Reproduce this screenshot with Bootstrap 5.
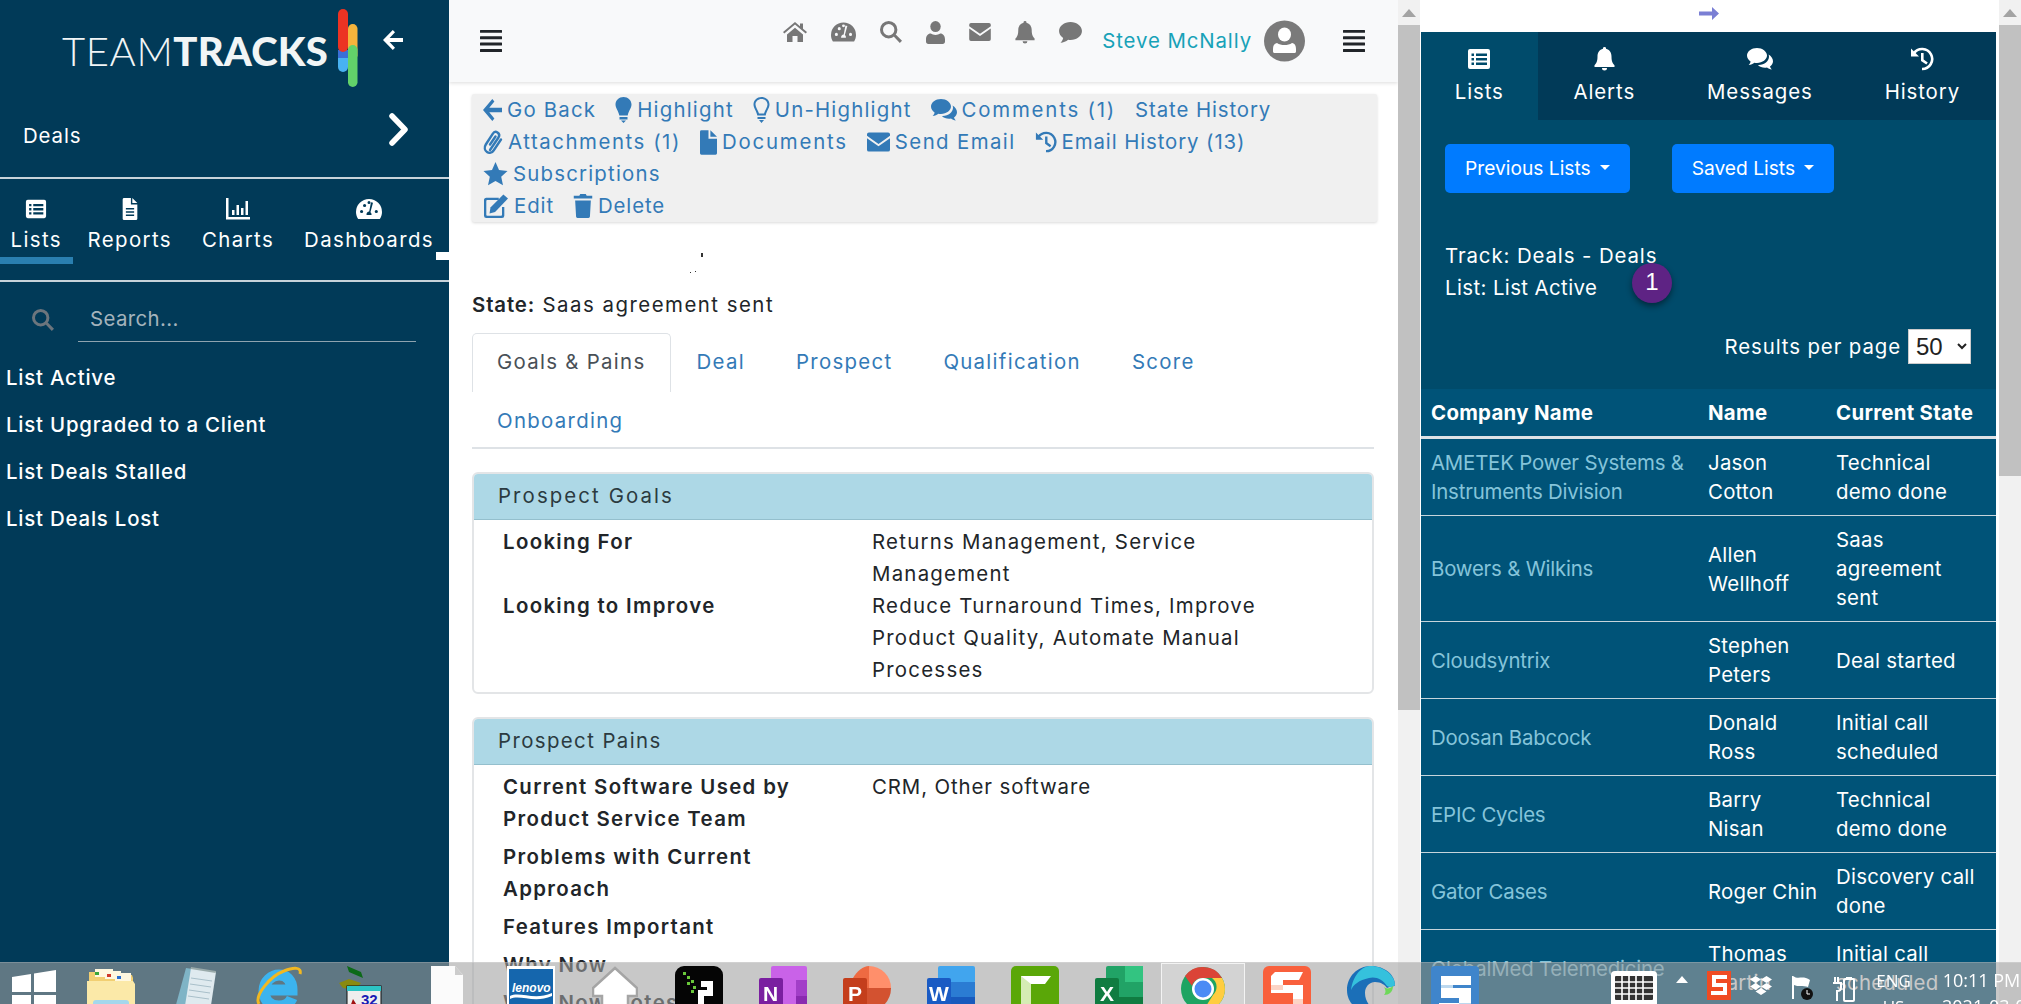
<!DOCTYPE html>
<html lang="en">
<head>
<meta charset="utf-8">
<title>TeamTracks</title>
<link href="https://cdn.jsdelivr.net/npm/bootstrap@5.3.0/dist/css/bootstrap.min.css" rel="stylesheet">
<style>
html,body{height:100%;overflow:hidden}
body{font-family:Inter,"Noto Sans",sans-serif;font-size:20.4px;letter-spacing:.9px;line-height:32px;color:#212529;background:#fff}
.shell{height:1004px;width:2021px}
svg{flex:none;fill:currentColor}
/* sidebar */
.side{width:449px;background:#013a58;color:#fff;flex:none}
.brand{height:179px;border-bottom:2px solid #c7d3da;position:relative}
.logo-row{height:90px;padding:9px 0 0 62px;gap:10px}
.logo-word{font-family:Lato,sans-serif;font-size:40px;line-height:53px;letter-spacing:.6px;color:#f1f5f6;font-weight:300;white-space:nowrap}
.logo-word b{font-weight:900;letter-spacing:.2px}
.back-ar{margin:21px 0 0 15px}
.deals-row{padding:0 40px 0 23px;height:87px}
.deals-row span{margin-top:4px}
.deals-row svg{margin-top:-8px}
.stabs{height:103px;border-bottom:2px solid #c7d3da;position:relative;letter-spacing:1.4px}
.stab{padding:19px 15px 0;height:85px;color:#fff;text-decoration:none;display:flex;flex-direction:column;align-items:center;line-height:30px}
.stab:hover{color:#fff}
.stab svg{margin-bottom:5px}
.stab.on{border-bottom:7px solid #2a7fb0;width:74px;padding-left:0;padding-right:0}
.stab-mark{position:absolute;right:0;top:73px;width:13px;height:8px;background:#fff}
.sfind{padding:19px 33px 0 32px;gap:24px;height:60px;align-items:center}
.sfind svg{margin-top:-4px}
.sfind input{background:transparent;border:0;border-bottom:1px solid #8ea3af;border-radius:0;color:#fff;width:338px;height:40px;padding:0 12px 5px;font-size:20.4px;letter-spacing:.4px}
.sfind input::placeholder{color:#a4b3bc}
.s-list{padding:0 6px;margin:12px 0 0;list-style:none}
.s-list li{height:47px;line-height:47px;font-weight:500;letter-spacing:.8px}
/* main */
.mainp{width:949px;flex:none;overflow:hidden;background:#fff}
.topbar{height:82px;background:#f8f9fa;box-shadow:0 1px 4px rgba(0,0,0,.14);padding:0 33px 0 31px;position:relative}
.top-ic{color:#777;gap:0;margin-left:auto;margin-top:-18px}
.top-ic svg{margin-right:24px}
.top-ic svg:last-child{margin-right:21px}
.uname{color:#17a2b8;white-space:nowrap;margin:0 12px 0 -1px}
.avatar{margin-right:38px}
.page{padding:12px 24px 0 23px}
.tools{background:#f0f0f0;box-shadow:0 1px 3px rgba(0,0,0,.15);padding:0 11px;height:128px;margin-right:-3px;border-radius:2px}
.tool-row{height:32px;gap:19px}
.tool-row a{color:#337ab7;text-decoration:none;display:inline-flex;align-items:center;gap:5px;white-space:nowrap}
.tool-row a.sp-a{letter-spacing:1.2px}
.tool-row a.sp-b{letter-spacing:1.4px}
.tool-row a.sp-c{letter-spacing:1.55px}
.tool-row a.sp-d{letter-spacing:1.8px}
.specks{height:67px;position:relative}
.specks i{position:absolute;background:#333;display:block}
.sp1{left:229px;top:31px;width:2px;height:4px}
.sp2{left:218px;top:50px;width:1px;height:1px}
.sp3{left:223px;top:49px;width:1px;height:1px}
.state-l{height:32px;letter-spacing:1.5px}
.state-l b{font-weight:600;letter-spacing:.9px}
.mtabs{margin-top:12px;border-bottom:2px solid #dee2e6;height:116px;flex-wrap:wrap;gap:0 1px;align-content:flex-start}
.mtabs .nav-link{height:59px;padding:13px 25px;color:#337ab7;line-height:32px;font-size:20.4px;border:0;letter-spacing:1.3px}
.mtabs .nav-link.active{color:#495057;background:#fff;border:1px solid #dee2e6;border-bottom:0;padding:12px 24px;border-radius:5px 5px 0 0}
.mtabs .brk{flex-basis:100%;height:0}
.pcard{margin-top:23px;border:2px solid #e3e5e7;border-radius:6px;overflow:hidden}
.pcard .card-header{background:#add8e6;border:0;border-bottom:1px solid #94bfcd;height:46px;padding:0 24px;line-height:44px;border-radius:0;color:#2b3a40;letter-spacing:1.4px}
.pcard .card-header.hd-goals{letter-spacing:2.1px}
.pcard .card-body{padding:6px 29px 6px}
.kv{display:grid;grid-template-columns:369px 1fr}
.kv b{font-weight:600;letter-spacing:1.35px}
.kv span{letter-spacing:1.25px}
.kv.gapb{margin-bottom:6px}
.kv.gapb span{letter-spacing:.9px}
/* fake scrollbars */
.sbar{width:22px;flex:none;background:#f1f1f1;display:flex;flex-direction:column}
.sbar-up{height:25px;display:flex;align-items:center;justify-content:center;color:#a3a3a3}
.sbar-thumb{background:#c1c1c1}
.sbar-main{height:685px}
.sbar-right{height:451px}
.sbar-gap{width:1px;flex:none}
/* right panel */
.rpanel{width:575px;flex:none;background:#004b6b;color:#fff}
.r-head{height:32px;background:#fff;color:#7a7fd4;display:flex;justify-content:center;padding-top:7px}
.rtabs{height:88px;background:#013a58}
.rtab{padding:15px 36px 0;display:flex;flex-direction:column;align-items:center;color:#fff;text-decoration:none;line-height:30px}
.rtab:hover{color:#fff}
.rtab svg{margin-bottom:6px}
.rtab.on{background:#004b6b;width:117px;padding-left:0;padding-right:0}
.r-btns{padding:24px 24px 0;gap:42px;box-sizing:content-box;height:49px}
.btn-blue{background:#007bff;color:#fff;border:0;font-size:19.2px;letter-spacing:0;height:49px;padding:0 20px;border-radius:5px;line-height:49px}
.btn-blue::after{margin-left:9px}
.r-track{padding:47px 24px 0;box-sizing:content-box;position:relative;height:64px}
.r-track .tight{letter-spacing:.4px}
.numdot{position:absolute;left:211px;top:70px;width:40px;height:40px;border-radius:50%;background:#5e2384;box-shadow:0 3px 6px rgba(0,0,0,.45);font-family:"Liberation Sans",Arial,sans-serif;font-size:24px;letter-spacing:0;line-height:38px;text-align:center;color:#fff}
.r-per{padding:0 25px 0 0;height:60px;margin-top:25px;justify-content:flex-end;align-items:flex-start;gap:7px}
.r-per span{line-height:36px}
.r-per select{width:63px;height:35px;background:#fff;border:1px solid #ccc;font-family:"Liberation Sans",Arial,sans-serif;font-size:24px;letter-spacing:0;padding:0 0 0 3px;border-radius:0;color:#222}
.rtable{--bs-table-bg:#005378;--bs-table-color:#fff;--bs-table-border-color:#c6d4db;table-layout:fixed;width:575px;margin:0;color:#fff}
.rtable td,.rtable th{padding:9px 5px 9px 10px;line-height:29px;vertical-align:middle;border-bottom:1px solid #c6d4db;background:#005378;color:#fff;white-space:nowrap;font-size:20.4px;letter-spacing:.25px}
.rtable th{font-weight:700;height:47px;border-bottom:3px solid #dee2e6;letter-spacing:.3px}
.rtable td a{color:#85c4da;text-decoration:none;letter-spacing:-.2px}
/* taskbar */
.taskbar{position:fixed;left:0;right:0;top:962px;height:42px;background:rgba(161,161,161,.59);border-top:1px solid rgba(255,255,255,.18);overflow:hidden;display:flex;letter-spacing:0}
.tslot{width:84px;flex:none;display:flex;justify-content:center;align-items:flex-start;padding-top:3px;color:#fff}
.tslot.act{background:rgba(255,255,255,.2);border:1px solid #f3f3f3;border-bottom:0}
.tfirst{margin-left:-15px}
.win-ic{margin-left:14px;margin-top:4px}
.tray{position:absolute;left:0;top:0;right:0;bottom:0;pointer-events:none}
.tray-row{position:absolute;right:0;top:0;height:42px;display:flex;align-items:flex-start}
.tray-ic{margin-top:13px;margin-right:19px}
.tray-clock{font-family:"Open Sans",sans-serif;color:#fff;font-size:18px;line-height:26px;text-align:center;white-space:nowrap;overflow:hidden;width:79px;margin-top:4px;margin-left:-1px}
.tray-lang{font-family:"Open Sans",sans-serif;color:#fff;font-size:17px;line-height:26px;text-align:center;width:45px;margin:5px 24px 0 0;padding-right:6px}
</style>
</head>
<body>
<svg width="0" height="0" class="position-absolute">
<defs>
<symbol id="i-list" viewBox="0 0 24 24"><path fill-rule="evenodd" d="M3 2h18a2 2 0 0 1 2 2v16a2 2 0 0 1-2 2H3a2 2 0 0 1-2-2V4a2 2 0 0 1 2-2zM4.500 6.500v2.500h2.500V6.500zm4.500 0v2.500h11V6.500zM4.500 11v2.500h2.500V11zm4.500 0v2.500h11V11zM4.500 15.500V18h2.500v-2.500zm4.500 0V18h11v-2.500z"/></symbol>
<symbol id="i-doc" viewBox="0 0 18 24"><path fill-rule="evenodd" d="M1 1.500A1.500 1.500 0 0 1 2.500 0H10v7h7v15.500a1.500 1.500 0 0 1-1.500 1.500h-13A1.500 1.500 0 0 1 1 22.500zM4.500 11v1.500h9V11zm0 3.500V16h9v-1.500zm0 3.500v1.500h9V18z"/><path d="M11.500 0 17 5.500h-5.500z"/></symbol>
<symbol id="i-chart" viewBox="0 0 24 22"><path d="M0 0h2.500v19H24v2.500H0zM6 12h2.500v5H6zM10.500 7H13v10h-2.500zM15 10h2.500v7H15zM19.500 3H22v14h-2.500z"/></symbol>
<symbol id="i-gauge" viewBox="0 0 26 20"><path fill-rule="evenodd" d="M13 0A13 13 0 0 0 0 13c0 2.500.7 4.800 2 6.800.2.200.4.200.6.200h20.800c.2 0 .4 0 .6-.2 1.300-2 2-4.300 2-6.800A13 13 0 0 0 13 0zM4 12.500a1.600 1.600 0 1 1 3.200 0 1.600 1.600 0 0 1-3.200 0zM7 6.500a1.600 1.600 0 1 1 3.200 0 1.600 1.600 0 0 1-3.200 0zM11.500 3.600a1.500 1.500 0 1 1 3 0 1.500 1.500 0 0 1-3 0zM18.700 12.500a1.600 1.600 0 1 1 3.200 0 1.600 1.600 0 0 1-3.200 0zM17 3.800l-2.600 9.400c.9.700 1.300 1.700 1.100 2.800H10.500c-.2-1.800 1.100-3.400 2.700-3.400L15 3.300z"/></symbol>
<symbol id="i-home" viewBox="0 0 24 20"><path d="M12 0 0 10l1.300 1.500L12 2.600l10.700 8.900L24 10l-4-3.300V1.500h-3v2.700zM4 12.500 12 5.700l8 6.800V20h-5.500v-6h-5v6H4z"/></symbol>
<symbol id="i-search" viewBox="0 0 22 22"><circle cx="8.700" cy="8.700" r="7.200" fill="none" stroke="currentColor" stroke-width="3"/><path d="M13.500 15.300l2-2L22 19.800 19.800 22z"/></symbol>
<symbol id="i-user" viewBox="0 0 20 24"><ellipse cx="10" cy="5.800" rx="5.500" ry="5.800"/><path d="M5 13c1.400 1 3 1.500 5 1.500s3.600-.5 5-1.500c3 0 5 2.500 5 6.200v2.300c0 1.500-1 2.500-2.500 2.500h-15C1 24 0 23 0 21.500v-2.300C0 15.500 2 13 5 13z"/></symbol>
<symbol id="i-mail" viewBox="0 0 24 20"><path d="M2 0h20a2 2 0 0 1 2 2v1.500L12 12 0 3.500V2a2 2 0 0 1 2-2zM0 6l12 8.500L24 6v12a2 2 0 0 1-2 2H2a2 2 0 0 1-2-2z"/></symbol>
<symbol id="i-bell" viewBox="0 0 20 24"><path d="M10 0a1.500 1.500 0 0 0-1.500 1.700C5 2.500 3 5.500 3 9.500c0 5-1.200 7-3 8.800V20h20v-1.700c-1.800-1.800-3-3.800-3-8.800 0-4-2-7-5.500-7.800A1.500 1.500 0 0 0 10 0zM7.500 21a2.500 2.500 0 0 0 5 0z"/></symbol>
<symbol id="i-bub" viewBox="0 0 24 22"><path d="M12 0C5.400 0 0 4.200 0 9.500c0 3 1.700 5.600 4.300 7.300-.3 1.800-1.300 3.500-2.800 5 3.200-.2 5.900-1.300 8-3.100.8.100 1.600.2 2.500.2 6.600 0 12-4.200 12-9.400S18.600 0 12 0z"/></symbol>
<symbol id="i-bubs" viewBox="0 0 26 24"><path d="M10 1C4.500 1 0 4.400 0 8.600c0 2.400 1.400 4.500 3.600 5.900-.2 1.200-.8 2.400-2 3.500 2.400-.2 4.400-1.100 5.800-2.300.8.200 1.700.3 2.600.3 5.500 0 10-3.400 10-7.400S15.500 1 10 1z"/><path d="M21.500 7.500c.3.700.5 1.500.5 2.300 0 4.400-4.500 8-10.200 8.200-.3 0-.6 0-.9 0 1.700 1.800 4.300 2.800 7.100 2.800.7 0 1.300 0 2-.2 1.300 1 2.900 1.800 4.800 2-1-1-1.500-2-1.800-3C24.700 18.400 26 16.500 26 14.300c0-2.800-1.800-5.300-4.500-6.800z"/></symbol>
<symbol id="i-back" viewBox="0 0 20 20"><path d="M9.800 0 12 2.200 6.600 8H20v4H6.600L12 17.800 9.800 20 0 10z"/></symbol>
<symbol id="i-bulb" viewBox="0 0 16 26"><path d="M8 0C3.500 0 0 3.200 0 7.500c0 3.500 2.800 6.200 3.800 11h8.400c1-4.800 3.800-7.500 3.800-11C16 3.200 12.500 0 8 0zM4 20h8v2.500H4zM5.500 23.500h5L8 26z"/></symbol>
<symbol id="i-bulbo" viewBox="0 0 16 26"><path fill-rule="evenodd" d="M8 0C3.500 0 0 3.200 0 7.500c0 3.500 2.800 6.200 3.800 11h8.400c1-4.800 3.800-7.500 3.800-11C16 3.200 12.500 0 8 0zm0 2c3.400 0 6 2.400 6 5.500 0 2.800-2.400 5.300-3.500 9h-5C4.400 12.800 2 10.300 2 7.500 2 4.400 4.600 2 8 2z"/><path d="M4 20h8v2H4zM5.500 23h5L8 26z"/></symbol>
<symbol id="i-clip" viewBox="0 0 20 26"><path fill="none" stroke="currentColor" stroke-width="2.400" stroke-linecap="round" d="M7 21 15.500 8.500c1.200-2 .6-4-1-5s-3.600-.6-4.800 1.300L2.800 15.500c-1.900 3-1 6 1.200 7.500s5 .8 6.800-1.800L18 10.500M7 15.500l5.500-8"/></symbol>
<symbol id="i-file" viewBox="0 0 18 26"><path d="M0 1.500A1.500 1.500 0 0 1 1.500 0H9v9h9v15.500a1.500 1.500 0 0 1-1.500 1.500h-15A1.500 1.500 0 0 1 0 24.500zM11 0l7 7h-7z"/></symbol>
<symbol id="i-hist" viewBox="0 0 24 24"><path fill="none" stroke="currentColor" stroke-width="2.600" d="M3.800 6.500A10 10 0 1 1 12 22"/><path d="M1 1.500v8h8zM11 6h2.600v6.500l4.200 3-1.500 2.100L11 14z"/></symbol>
<symbol id="i-star" viewBox="0 0 24 24"><path d="M12 0l3.500 8 8.500.9-6.300 5.800 1.800 8.600L12 19l-7.500 4.300 1.800-8.600L0 8.900 8.500 8z"/></symbol>
<symbol id="i-edit" viewBox="0 0 26 26"><path d="M3 4h13v2.500H3.500a1 1 0 0 0-1 1v15a1 1 0 0 0 1 1h15a1 1 0 0 0 1-1V14H22v9.500a2.500 2.500 0 0 1-2.500 2.500H2.500A2.500 2.500 0 0 1 0 23.500v-17A2.500 2.500 0 0 1 3 4z"/><path d="M21 .5 26 5 12 19.500l-6 1.500 1-6.300z"/></symbol>
<symbol id="i-trash" viewBox="0 0 20 26"><path d="M7 0h6l1 2h6v3H0V2h6zM1.500 7h17l-1 17.500c0 .8-.7 1.500-1.500 1.500H4c-.8 0-1.500-.7-1.500-1.500z"/></symbol>
<symbol id="i-burger" viewBox="0 0 22 22"><path d="M.500 0h21a.500.500 0 0 1 .5.500v1.800a.5.500 0 0 1-.5.500H.5a.5.5 0 0 1-.5-.5V.5A.5.5 0 0 1 .500 0zM.5 6.200h21a.5.5 0 0 1 .5.500v2a.5.5 0 0 1-.5.500H.5a.5.5 0 0 1-.5-.5v-2a.5.5 0 0 1 .5-.5zM.5 12.600h21a.5.5 0 0 1 .5.5v2a.5.5 0 0 1-.5.500H.5a.5.5 0 0 1-.5-.5v-2a.5.5 0 0 1 .5-.5zM.5 19h21a.5.5 0 0 1 .5.500v2a.5.5 0 0 1-.5.500H.5a.5.5 0 0 1-.5-.5v-2A.5.5 0 0 1 .5 19z"/></symbol>
</defs>
</svg>

<div class="shell d-flex">
  <!-- sidebar -->
  <aside class="side">
    <div class="brand">
      <div class="logo-row d-flex align-items-start">
        <div class="logo-word mt-3">TEAM<b>TRACKS</b></div>
        <svg width="20" height="78" viewBox="0 0 20 78"><rect x="0" y="41" width="10" height="22" rx="5" fill="#48b2f2"/><rect x="0" y="41" width="10" height="8" fill="#3a6fd8"/><rect x="10" y="15" width="9.500" height="36" rx="4.700" fill="#f5b43c"/><rect x="0" y="0" width="10" height="43" rx="5" fill="#ec3323"/><rect x="10" y="36" width="9.500" height="42" rx="4.700" fill="#62d26a"/></svg>
        <svg width="20" height="20" class="back-ar"><use href="#i-back"/></svg>
      </div>
      <div class="deals-row d-flex align-items-center justify-content-between">
        <span>Deals</span>
        <svg width="20" height="33" viewBox="0 0 20 33"><path d="M3 3l13 13.500L3 30" fill="none" stroke="#fff" stroke-width="5.500" stroke-linecap="round" stroke-linejoin="round"/></svg>
      </div>
    </div>
    <nav class="stabs d-flex">
      <a class="stab on" href="#"><svg width="24" height="22" viewBox="0 0 24 24"><use href="#i-list"/></svg>Lists</a>
      <a class="stab" href="#"><svg width="18" height="22" viewBox="0 0 18 24"><use href="#i-doc"/></svg>Reports</a>
      <a class="stab" href="#"><svg width="24" height="22" viewBox="0 0 24 22"><use href="#i-chart"/></svg>Charts</a>
      <a class="stab" href="#"><svg width="26" height="22" viewBox="0 0 26 20"><use href="#i-gauge"/></svg>Dashboards</a>
      <span class="stab-mark"></span>
    </nav>
    <div class="sfind d-flex">
      <svg width="22" height="22" viewBox="0 0 22 22" class="text-secondary"><use href="#i-search"/></svg>
      <input class="form-control" type="text" placeholder="Search...">
    </div>
    <ul class="s-list">
      <li>List Active</li>
      <li>List Upgraded to a Client</li>
      <li>List Deals Stalled</li>
      <li>List Deals Lost</li>
    </ul>
  </aside>

  <!-- main -->
  <main class="mainp">
    <div class="topbar d-flex align-items-center">
      <svg width="22" height="22" class="text-dark"><use href="#i-burger"/></svg>
      <div class="top-ic d-flex align-items-center">
        <svg width="24" height="20"><use href="#i-home"/></svg>
        <svg width="25" height="20"><use href="#i-gauge"/></svg>
        <svg width="22" height="22"><use href="#i-search"/></svg>
        <svg width="19" height="23"><use href="#i-user"/></svg>
        <svg width="22" height="18"><use href="#i-mail"/></svg>
        <svg width="20" height="23"><use href="#i-bell"/></svg>
        <svg width="23" height="21"><use href="#i-bub"/></svg>
      </div>
      <span class="uname">Steve McNally</span>
      <svg class="avatar" width="41" height="42" viewBox="0 0 41 42"><circle cx="20.500" cy="21" r="20.500" fill="#7a7a7a"/><ellipse cx="20.500" cy="14.500" rx="6.500" ry="7" fill="#fff"/><path d="M13 23c2 1.500 4.800 2 7.500 2s5.500-.5 7.500-2c3 .5 4 3 4 6v2.500c0 1.200-1 1.500-2 1.500H11c-1 0-2-.3-2-1.500V29c0-3 1-5.500 4-6z" fill="#fff"/></svg>
      <svg width="22" height="22" class="text-dark"><use href="#i-burger"/></svg>
    </div>
    <div class="page">
      <div class="tools">
        <div class="tool-row d-flex align-items-center">
          <a class="sp-a" href="#"><svg width="19" height="22" viewBox="0 0 20 20" preserveAspectRatio="none"><use href="#i-back"/></svg>Go Back</a>
          <a class="sp-a" href="#"><svg width="17" height="26"><use href="#i-bulb"/></svg>Highlight</a>
          <a class="sp-a" href="#"><svg width="17" height="26"><use href="#i-bulbo"/></svg>Un-Highlight</a>
          <a class="sp-d" href="#"><svg width="26" height="24"><use href="#i-bubs"/></svg>Comments (1)</a>
          <a href="#">State History</a>
        </div>
        <div class="tool-row d-flex align-items-center">
          <a class="sp-c" href="#"><svg width="20" height="26"><use href="#i-clip"/></svg>Attachments (1)</a>
          <a class="sp-d" href="#"><svg width="17" height="25"><use href="#i-file"/></svg>Documents</a>
          <a class="sp-b" href="#"><svg width="23" height="20"><use href="#i-mail"/></svg>Send Email</a>
          <a href="#"><svg width="22" height="22"><use href="#i-hist"/></svg>Email History (13)</a>
        </div>
        <div class="tool-row d-flex align-items-center">
          <a class="sp-a" href="#"><svg width="25" height="24"><use href="#i-star"/></svg>Subscriptions</a>
        </div>
        <div class="tool-row d-flex align-items-center">
          <a href="#"><svg width="26" height="24"><use href="#i-edit"/></svg>Edit</a>
          <a href="#"><svg width="20" height="24"><use href="#i-trash"/></svg>Delete</a>
        </div>
      </div>
      <div class="specks"><i class="sp1"></i><i class="sp2"></i><i class="sp3"></i></div>
      <div class="state-l"><b>State:</b> Saas agreement sent</div>
      <ul class="nav mtabs">
        <li class="nav-item"><a class="nav-link active" href="#">Goals &amp; Pains</a></li>
        <li class="nav-item"><a class="nav-link" href="#">Deal</a></li>
        <li class="nav-item"><a class="nav-link" href="#">Prospect</a></li>
        <li class="nav-item"><a class="nav-link" href="#">Qualification</a></li>
        <li class="nav-item"><a class="nav-link" href="#">Score</a></li>
        <li class="brk"></li>
        <li class="nav-item"><a class="nav-link" href="#">Onboarding</a></li>
      </ul>
      <div class="card pcard">
        <div class="card-header hd-goals">Prospect Goals</div>
        <div class="card-body">
          <div class="kv"><b>Looking For</b><span>Returns Management, Service<br>Management</span></div>
          <div class="kv"><b>Looking to Improve</b><span>Reduce Turnaround Times, Improve<br>Product Quality, Automate Manual<br>Processes</span></div>
        </div>
      </div>
      <div class="card pcard">
        <div class="card-header">Prospect Pains</div>
        <div class="card-body">
          <div class="kv gapb"><b>Current Software Used by<br>Product Service Team</b><span>CRM, Other software</span></div>
          <div class="kv gapb"><b>Problems with Current<br>Approach</b><span></span></div>
          <div class="kv gapb"><b>Features Important</b><span></span></div>
          <div class="kv gapb"><b>Why Now</b><span></span></div>
          <div class="kv"><b>Why Now Notes</b><span></span></div>
        </div>
      </div>
    </div>
  </main>

  <div class="sbar">
    <div class="sbar-up"><svg width="14" height="8"><path d="M7 0l7 8H0z"/></svg></div>
    <div class="sbar-thumb sbar-main"></div>
  </div>
  <div class="sbar-gap"></div>

  <!-- right panel -->
  <section class="rpanel">
    <div class="r-head"><svg width="20" height="13" viewBox="0 0 20 13"><path d="M0 4.500h13V0l7 6.500-7 6.500V8.500H0z"/></svg></div>
    <nav class="rtabs d-flex">
      <a class="rtab on" href="#"><svg width="24" height="24"><use href="#i-list"/></svg>Lists</a>
      <a class="rtab" href="#"><svg width="21" height="24"><use href="#i-bell"/></svg>Alerts</a>
      <a class="rtab" href="#"><svg width="26" height="24"><use href="#i-bubs"/></svg>Messages</a>
      <a class="rtab" href="#"><svg width="24" height="24"><use href="#i-hist"/></svg>History</a>
    </nav>
    <div class="r-btns d-flex">
      <button class="btn btn-blue dropdown-toggle" type="button">Previous Lists</button>
      <button class="btn btn-blue dropdown-toggle" type="button">Saved Lists</button>
    </div>
    <div class="r-track">
      <div>Track: Deals - Deals</div>
      <div class="tight">List: List Active</div>
      <span class="numdot">1</span>
    </div>
    <div class="r-per d-flex">
      <span>Results per page</span>
      <select><option>50</option></select>
    </div>
    <table class="table rtable">
      <colgroup><col width="277"><col width="128"><col width="170"></colgroup>
      <thead><tr><th>Company Name</th><th>Name</th><th>Current State</th></tr></thead>
      <tbody>
        <tr><td><a href="#">AMETEK Power Systems &amp;<br>Instruments Division</a></td><td>Jason<br>Cotton</td><td>Technical<br>demo done</td></tr>
        <tr><td><a href="#">Bowers &amp; Wilkins</a></td><td>Allen<br>Wellhoff</td><td>Saas<br>agreement<br>sent</td></tr>
        <tr><td><a href="#">Cloudsyntrix</a></td><td>Stephen<br>Peters</td><td>Deal started</td></tr>
        <tr><td><a href="#">Doosan Babcock</a></td><td>Donald<br>Ross</td><td>Initial call<br>scheduled</td></tr>
        <tr><td><a href="#">EPIC Cycles</a></td><td>Barry<br>Nisan</td><td>Technical<br>demo done</td></tr>
        <tr><td><a href="#">Gator Cases</a></td><td>Roger Chin</td><td>Discovery call<br>done</td></tr>
        <tr><td><a href="#">GlobalMed Telemedicine</a></td><td>Thomas<br>Martin</td><td>Initial call<br>scheduled</td></tr>
      </tbody>
    </table>
  </section>
  <div class="sbar ms-auto">
    <div class="sbar-up"><svg width="14" height="8"><path d="M7 0l7 8H0z"/></svg></div>
    <div class="sbar-thumb sbar-right"></div>
  </div>
</div>

<!-- taskbar -->
<div class="taskbar">
  <div class="tslot tfirst"><svg class="win-ic" width="44" height="44" viewBox="0 0 44 44"><path fill="#fff" d="M0 7l19-3v18H0zM22 3.500 44 0v22H22zM0 25h19v16L0 38zM22 25h22v19l-22-3z"/></svg></div>
  <div class="tslot"><svg width="48" height="48" viewBox="0 0 48 48"><path fill="#f2cf72" d="M2 6h12l3 3h28l1 3v36H2z"/><path fill="#fff8e0" d="M8 3h18v8H8zM18 5h16v8H18zM28 7h16v8H28z"/><path fill="#fbe9a8" d="M0 15h46l2 3v30H0z"/><rect x="8" y="6" width="4" height="3" fill="#3aa63a"/><rect x="20" y="8" width="4" height="3" fill="#d03a2a"/><rect x="30" y="10" width="4" height="3" fill="#2a70d0"/><rect x="6" y="34" width="36" height="14" rx="3" fill="#a4d7ec"/></svg></div>
  <div class="tslot"><svg width="42" height="46" viewBox="0 0 42 46"><path fill="#7fb4c6" d="M12 2 38 6 32 46 0 46z"/><path fill="#dfeaef" d="M17 2l25 4-6 40H10z"/><path fill="#9aa" d="M17 1l25 4-.4 2-25-4z"/><path stroke="#a9c0ca" stroke-width="1" d="M17 12l21 3M16 18l21 3M15 24l21 3M14 30l21 3"/></svg></div>
  <div class="tslot"><svg width="46" height="44" viewBox="0 0 46 44"><path fill="none" stroke="#3cb4ef" stroke-width="11" d="M10 24h26c0-10-6-15-13-15S8 15 8 25s7 15 15 15c6 0 11-3 13-8"/><path fill="none" stroke="#f1b821" stroke-width="3" d="M3 38C-2 30 14 10 28 5c10-4 18-4 16 3"/></svg></div>
  <div class="tslot"><svg width="48" height="44" viewBox="0 0 48 44"><path fill="#0c6a18" d="M8 0l14 6 2 6-14-6z"/><path fill="#8a8a10" d="M0 17l10-4 12 4-6 7-12-2z"/><rect x="8" y="20" width="34" height="26" fill="#eee" stroke="#111" stroke-width="1"/><rect x="8" y="20" width="34" height="5" fill="#2cc4c4"/><text x="22" y="39" font-size="15" font-weight="700" fill="#1a1ab4" font-family="Liberation Sans">32</text><path fill="#a01010" d="M14 33l5 8h-8z"/></svg></div>
  <div class="tslot"><svg width="32" height="44" viewBox="0 0 32 44"><path fill="#fbfbfb" d="M0 0h24l8 9v35H0z"/><path fill="#ccc" d="M24 0l8 9h-8z"/></svg></div>
  <div class="tslot"><svg width="48" height="46" viewBox="0 0 48 46"><rect width="48" height="46" fill="#fff"/><rect x="2" y="3" width="44" height="43" fill="#1566ad"/><path fill="#fff" d="M3 30c10-5 24 5 42-3v3c-18 8-32-2-42 3z"/><text x="5" y="26" font-size="12" font-style="italic" font-weight="700" fill="#fff" font-family="Liberation Sans">lenovo</text></svg></div>
  <div class="tslot"><svg width="46" height="44" viewBox="0 0 46 44"><path fill="#fff" stroke="#a5a5a5" stroke-width="2.500" d="M23 2 45 22v8H36v14H10V30H1v-8z"/></svg></div>
  <div class="tslot"><svg width="48" height="46" viewBox="0 0 48 46"><rect width="48" height="46" rx="9" fill="#050505"/><path fill="none" stroke="#fff" stroke-width="6" d="M26 18h9v9H26v14"/><path fill="#69c83a" d="M8 6h3v3H8zM12 10h3v3h-3zM16 14h3v3h-3zM12 16h3v3h-3zM18 20h3v3h-3zM16 24h3v3h-3z"/></svg></div>
  <div class="tslot"><svg width="48" height="46" viewBox="0 0 48 46"><rect x="12" y="0" width="36" height="46" rx="2" fill="#c962e8"/><rect x="37" y="14" width="11" height="16" fill="#a23fc8"/><rect x="37" y="30" width="11" height="16" fill="#8a2ab0"/><rect x="0" y="12" width="24" height="32" rx="2" fill="#7a1fa0"/><text x="4" y="35" font-size="21" font-weight="700" fill="#fff" font-family="Liberation Sans">N</text></svg></div>
  <div class="tslot"><svg width="48" height="46" viewBox="0 0 48 46"><path fill="#ff8f6b" d="M26 0a22 22 0 0 1 22 22H26z"/><path fill="#d35230" d="M26 22h22a24 24 0 0 1-22 24 24 24 0 0 1-16-7V22z"/><path fill="#ee6a42" d="M10 12C14 5 20 0 26 0v22H10z"/><rect x="0" y="12" width="24" height="32" rx="2" fill="#c43e1c"/><text x="5" y="35" font-size="21" font-weight="700" fill="#fff" font-family="Liberation Sans">P</text></svg></div>
  <div class="tslot"><svg width="48" height="46" viewBox="0 0 48 46"><rect x="11" y="0" width="37" height="17" rx="2" fill="#41a5ee"/><rect x="11" y="16" width="37" height="16" fill="#2b7cd3"/><rect x="11" y="31" width="37" height="15" fill="#185abd"/><rect x="0" y="12" width="24" height="32" rx="2" fill="#1a5bc4"/><text x="2" y="35" font-size="21" font-weight="700" fill="#fff" font-family="Liberation Sans">W</text></svg></div>
  <div class="tslot"><svg width="48" height="46" viewBox="0 0 48 46"><rect width="48" height="46" rx="5" fill="#5aa708"/><path fill="#fff" d="M10 10h30l-6 8H20v22h18v6H14l-4-4z"/><path fill="#d5ecb4" d="M10 10l10 8v22l-10 4z"/></svg></div>
  <div class="tslot"><svg width="48" height="46" viewBox="0 0 48 46"><rect x="11" y="0" width="37" height="46" rx="2" fill="#21a366"/><rect x="30" y="0" width="18" height="16" fill="#33c481"/><rect x="11" y="31" width="37" height="15" fill="#107c41"/><rect x="0" y="12" width="24" height="32" rx="2" fill="#107c41"/><text x="5" y="35" font-size="21" font-weight="700" fill="#fff" font-family="Liberation Sans">X</text></svg></div>
  <div class="tslot act"><svg width="44" height="44" viewBox="0 0 44 44"><circle cx="22" cy="22" r="22" fill="#1da462"/><path fill="#db4437" d="M22 0A22 22 0 0 1 41 11H22a11 11 0 0 0-11 8L4 9A22 22 0 0 1 22 0z"/><path fill="#ffcd40" d="M41 11A22 22 0 0 1 22 44l10-16a11 11 0 0 0-1-17z"/><circle cx="22" cy="22" r="11" fill="#fff"/><circle cx="22" cy="22" r="8.500" fill="#4b8bf5"/></svg></div>
  <div class="tslot"><svg width="48" height="46" viewBox="0 0 48 46"><rect width="48" height="46" rx="6" fill="#f9603c"/><path fill="#fff" d="M12 6h28l-4 8H20v5h20v27H8v-8h22v-11H8V10z"/><path fill="#fcd4c6" d="M8 19l12 0v5H8zM30 33h10v5H30z"/></svg></div>
  <div class="tslot"><svg width="48" height="46" viewBox="0 0 48 46"><path fill="#1b6fb8" d="M24 0C10 0 0 11 0 24s10 22 24 22c6 0 8-1 8-1-8-2-14-9-14-18 0-6 4-11 10-11s10 3 12 6c3-2 8-1 8-3C48 9 38 0 24 0z"/><path fill="#35c1dd" d="M24 0c12 0 24 9 24 19-2 2-5 3-8 1-4-7-12-10-18-8C12 14 6 19 4 24 6 10 14 0 24 0z"/><path fill="#6fd85a" d="M46 20c-3 3-7 3-9 1 2 3 2 6 0 8 5 0 9-3 9-9z"/></svg></div>
  <div class="tslot"><svg width="48" height="46" viewBox="0 0 48 46"><rect width="48" height="46" rx="4" fill="#3f85cb"/><path fill="#fff" d="M10 10h30v9H22v3h18v24H8v-9h20v-5H10z"/><path fill="#bcd8ef" d="M10 19h12v3H10zM28 37h12v4H28z"/></svg></div>
  <div class="tray">
    <div class="tray-row">
      <svg class="tray-ic mt-2" width="46" height="40" viewBox="0 0 46 40"><rect width="46" height="40" rx="4" fill="#fff"/><rect x="4" y="5" width="38" height="24" rx="1" fill="#333"/><path stroke="#fff" stroke-width="1.600" d="M4 11h38M4 17h38M4 23h38M11 5v24M18 5v24M25 5v24M32 5v24"/></svg>
      <svg class="tray-ic" width="12" height="7" viewBox="0 0 12 7"><path d="M6 0l6 7H0z" fill="#fff"/></svg>
      <svg class="tray-ic mt-2" width="24" height="29" viewBox="0 0 24 29"><rect width="24" height="29" fill="#f04b23"/><path fill="#fff" d="M5 4h15v4H9v4h11v12H4v-4h12v-4H5z"/></svg>
      <svg class="tray-ic" width="22" height="20" viewBox="0 0 22 20"><path fill="#fff" d="M5.500 0 11 3.500 5.500 7 0 3.500zM16.500 0 22 3.500 16.500 7 11 3.500zM5.500 7 11 10.500 5.500 14 0 10.500zM16.500 7 22 10.500 16.500 14 11 10.500zM5.500 15.500 11 12l5.500 3.500L11 19z"/></svg>
      <svg class="tray-ic" width="22" height="24" viewBox="0 0 22 24"><path fill="#fff" d="M2 0c5 4 10-1 17 4l-2 7c-5-2-10 0-14-2v14H1V0z"/><circle cx="16" cy="18" r="6" fill="#111"/><path stroke="#fff" d="M16 14v4h3" fill="none"/></svg>
      <svg class="tray-ic" width="23" height="26" viewBox="0 0 23 26"><path fill="none" stroke="#fff" stroke-width="2" d="M3 1v6M6 1v6M1 7h8v5c0 2-2 3-4 3v10"/><rect x="12" y="3" width="10" height="22" rx="1" fill="none" stroke="#fff" stroke-width="2"/><rect x="14" y="1" width="6" height="2" fill="#fff"/></svg>
      <div class="tray-lang">ENG<br>US</div>
      <div class="tray-clock">10:11 PM<br>2021-03-0</div>
    </div>
  </div>
</div>
</body>
</html>
